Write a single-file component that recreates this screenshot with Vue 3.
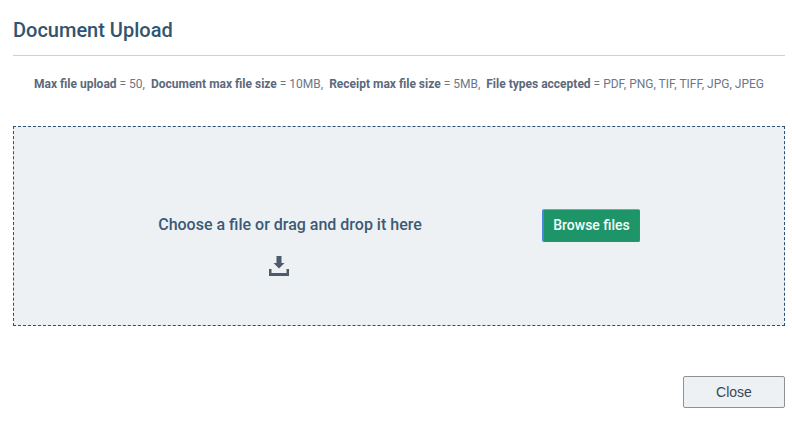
<template>
  <div class="upload-dialog">
    <h2 class="title">Document Upload</h2>

    <p class="limits">
      <template v-for="(limit, i) in limits" :key="limit.label">
        <strong>{{ limit.label }}</strong> = {{ limit.value }}<span v-if="i < limits.length - 1">,&nbsp; </span>
      </template>
    </p>

    <div class="dropzone">
      <div class="drop-text">
        <span>Choose a file or drag and drop it here</span>
        <svg class="drop-icon" width="20" height="20" viewBox="0 0 20 20">
          <path d="M7.500 0h5v7h3l-5.500 5.500L4.500 7h3z" fill="#4d5b6f" />
          <path d="M0 13h2.500v4h15v-4H20v7H0z" fill="#4d5b6f" />
        </svg>
      </div>
      <button class="browse">Browse files</button>
    </div>

    <div class="footer">
      <button class="close">Close</button>
    </div>
  </div>
</template>

<script setup>
const limits = [
  { label: 'Max file upload', value: '50' },
  { label: 'Document max file size', value: '10MB' },
  { label: 'Receipt max file size', value: '5MB' },
  { label: 'File types accepted', value: 'PDF, PNG, TIF, TIFF, JPG, JPEG' },
]
</script>

<style scoped>
.upload-dialog {
  box-sizing: border-box;
  width: 792px;
  height: 439px;
  padding: 0 7px 0 13px;
  background: #fff;
  font-family: Roboto, 'Liberation Sans', sans-serif;
}

.title {
  margin: 0;
  height: 56px;
  box-sizing: border-box;
  padding-top: 17px;
  border-bottom: 1px solid #ccd0d3;
  color: #315470;
  font-size: 20px;
  line-height: 26px;
  font-weight: 500;
}

.limits {
  margin: 0;
  padding: 20px 0 0 21px;
  height: 70px;
  box-sizing: border-box;
  color: #6b7788;
  font-size: 12px;
  line-height: 16px;
  white-space: nowrap;
}

.limits strong {
  font-weight: 700;
  color: #5b697c;
}

.dropzone {
  box-sizing: border-box;
  height: 200px;
  display: flex;
  align-items: flex-start;
  padding: 82px 0 0 144px;
  border: 1px dashed #2d4f70;
  background: #edf1f4;
}

.drop-text {
  display: flex;
  flex-direction: column;
  align-items: center;
  width: 264px;
  color: #3c5a75;
  font-size: 16px;
  font-weight: 500;
  line-height: 32px;
}

.drop-icon {
  margin: 15px 23px 0 0;
}

.browse {
  margin: 0 0 0 120px;
  width: 98px;
  height: 33px;
  padding: 0 0 2px;
  border: 1px solid #1c9a6e;
  border-left: 2px solid #4a86e0;
  border-top-color: #6aa0d8;
  border-radius: 2px;
  background: #1e9569;
  color: #f4fbf8;
  font-family: inherit;
  font-size: 14px;
  font-weight: 500;
}

.footer {
  display: flex;
  justify-content: flex-end;
  padding-top: 50px;
}

.close {
  width: 102px;
  height: 32px;
  padding: 0;
  border: 1px solid #8d9297;
  border-radius: 2px;
  background: #edf1f4;
  color: #37465a;
  font-family: 'Liberation Sans', Arial, sans-serif;
  font-size: 14px;
}
</style>
